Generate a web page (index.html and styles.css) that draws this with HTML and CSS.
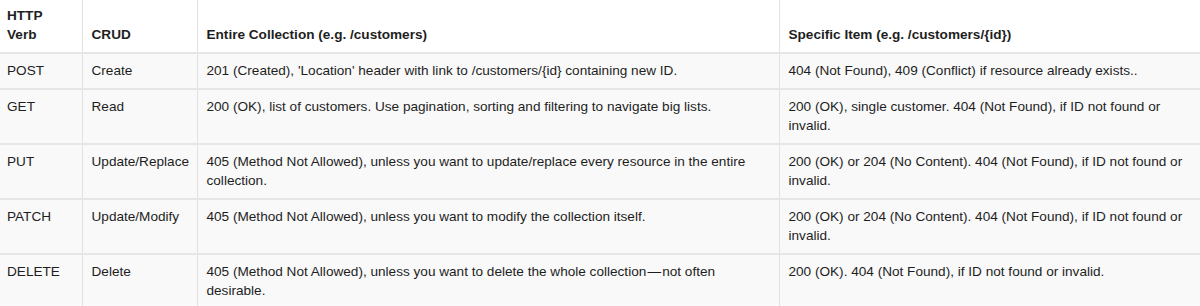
FILE: index.html
```html
<!DOCTYPE html>
<html lang="en">
<head>
  <meta charset="UTF-8">
  <title>REST Verbs and Status Codes</title>
  <link rel="stylesheet" href="styles.css">
</head>
<body>
  <table class="verbs">
    <colgroup>
      <col class="col-verb">
      <col class="col-crud">
      <col class="col-collection">
      <col class="col-item">
    </colgroup>
    <thead>
      <tr>
        <th>HTTP<br>Verb</th>
        <th>CRUD</th>
        <th>Entire Collection (e.g. /customers)</th>
        <th>Specific Item (e.g. /customers/{id})</th>
      </tr>
    </thead>
    <tbody>
      <tr>
        <td>POST</td>
        <td>Create</td>
        <td>201 (Created), 'Location' header with link to /customers/{id} containing new ID.</td>
        <td>404 (Not Found), 409 (Conflict) if resource already exists..</td>
      </tr>
      <tr>
        <td>GET</td>
        <td>Read</td>
        <td>200 (OK), list of customers. Use pagination, sorting and filtering to navigate big lists.</td>
        <td>200 (OK), single customer. 404 (Not Found), if ID not found or invalid.</td>
      </tr>
      <tr>
        <td>PUT</td>
        <td>Update/Replace</td>
        <td>405 (Method Not Allowed), unless you want to update/replace every resource in the entire collection.</td>
        <td>200 (OK) or 204 (No Content). 404 (Not Found), if ID not found or invalid.</td>
      </tr>
      <tr>
        <td>PATCH</td>
        <td>Update/Modify</td>
        <td>405 (Method Not Allowed), unless you want to modify the collection itself.</td>
        <td>200 (OK) or 204 (No Content). 404 (Not Found), if ID not found or invalid.</td>
      </tr>
      <tr>
        <td>DELETE</td>
        <td>Delete</td>
        <td>405 (Method Not Allowed), unless you want to delete the whole collection&#8202;—&#8202;not often desirable.</td>
        <td>200 (OK). 404 (Not Found), if ID not found or invalid.</td>
      </tr>
    </tbody>
  </table>
</body>
</html>
```

FILE: styles.css
```css
body {
  margin: 0;
  background: #fff;
  font-family: 'Liberation Sans', Arial, sans-serif;
  font-size: 13.6px;
  line-height: 19px;
  color: #1e1e1e;
}
.verbs {
  width: 1200px;
  border-collapse: collapse;
  table-layout: fixed;
}
.col-verb { width: 82px; }
.col-crud { width: 115px; }
.col-collection { width: 582px; }
.col-item { width: 421px; }
th, td {
  text-align: left;
  padding: 7px 9px 8px;
  border-left: 1px solid #e2e2e2;
}
th:first-child, td:first-child {
  border-left: none;
  padding-left: 7px;
}
th {
  font-weight: bold;
  vertical-align: bottom;
  padding-top: 6px;
  background: #fff;
}
td {
  vertical-align: top;
  background: #f9f9f9;
  border-top: 2px solid #e6e6e6;
}
```
